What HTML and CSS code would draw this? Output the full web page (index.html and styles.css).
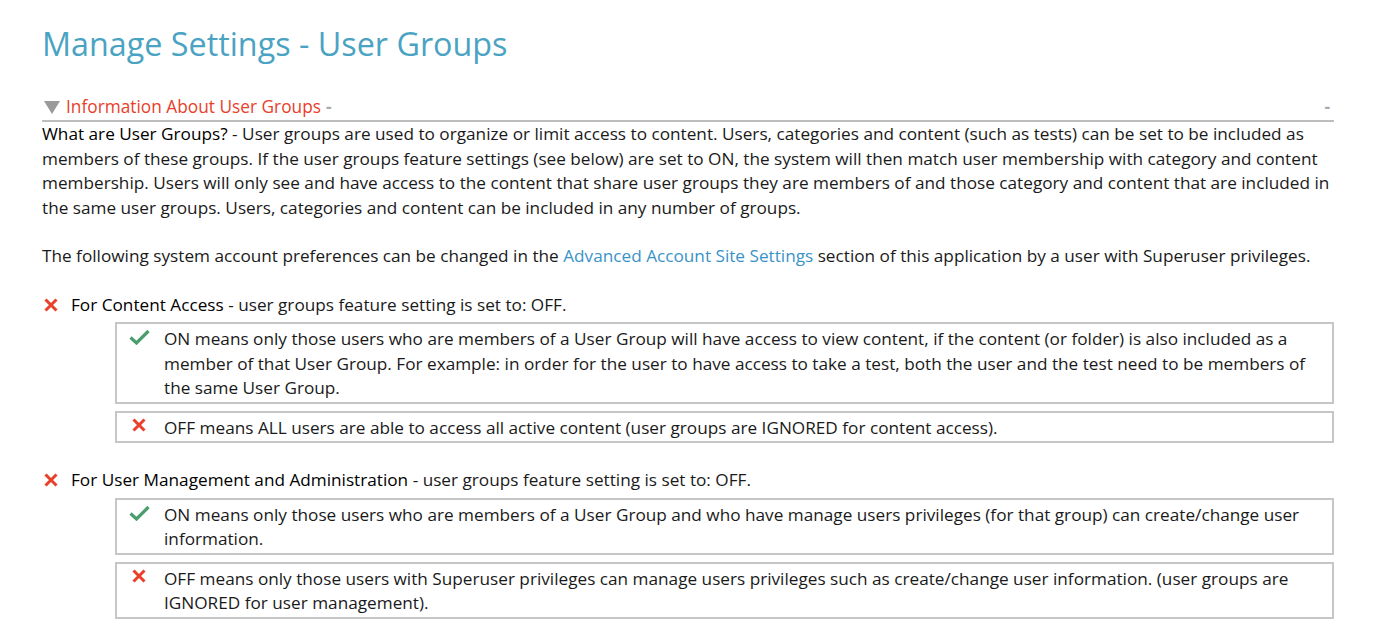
FILE: index.html
```html
<!DOCTYPE html>
<html lang="en">
<head>
  <meta charset="UTF-8" />
  <title>Manage Settings - User Groups</title>
  <link rel="stylesheet" href="styles.css">
</head>
<body>
  <h1 class="page-title">Manage Settings - User Groups</h1>

  <div class="section-head">
    <span class="arrow"></span>
    <span class="section-title">Information About User Groups</span>
    <span class="dash">-</span>
    <span class="dash right">-</span>
  </div>

  <div class="section-body">
    <p><span class="dark">What are User Groups?</span> - User groups are used to organize or limit access to content. Users, categories and content (such as tests) can be set to be included as members of these groups. If the user groups feature settings (see below) are set to ON, the system will then match user membership with category and content membership. Users will only see and have access to the content that share user groups they are members of and those category and content that are included in the same user groups. Users, categories and content can be included in any number of groups.</p>

    <p>The following system account preferences can be changed in the <a href="#">Advanced Account Site Settings</a> section of this application by a user with Superuser privileges.</p>

    <div class="setting">
      <div class="setting-line">
        <svg class="icon" viewBox="0 0 16 16"><path d="M2.5 2.5 L13.5 13.5 M13.5 2.5 L2.5 13.5" stroke="#e8402a" stroke-width="3" /></svg>
        <span><span class="dark">For Content Access</span> - user groups feature setting is set to: OFF.</span>
      </div>
      <div class="option">
        <svg class="icon check" viewBox="0 0 22 16"><path d="M2 8.5 L8 14 L20 2" stroke="#4a9e6c" stroke-width="3.2" fill="none" /></svg>
        <span>ON means only those users who are members of a User Group will have access to view content, if the content (or folder) is also included as a member of that User Group. For example: in order for the user to have access to take a test, both the user and the test need to be members of the same User Group.</span>
      </div>
      <div class="option">
        <svg class="icon cross" viewBox="0 0 16 16"><path d="M2.5 2.5 L13.5 13.5 M13.5 2.5 L2.5 13.5" stroke="#e8402a" stroke-width="3" /></svg>
        <span>OFF means ALL users are able to access all active content (user groups are IGNORED for content access).</span>
      </div>
    </div>

    <div class="setting">
      <div class="setting-line">
        <svg class="icon" viewBox="0 0 16 16"><path d="M2.5 2.5 L13.5 13.5 M13.5 2.5 L2.5 13.5" stroke="#e8402a" stroke-width="3" /></svg>
        <span><span class="dark">For User Management and Administration</span> - user groups feature setting is set to: OFF.</span>
      </div>
      <div class="option">
        <svg class="icon check" viewBox="0 0 22 16"><path d="M2 8.5 L8 14 L20 2" stroke="#4a9e6c" stroke-width="3.2" fill="none" /></svg>
        <span>ON means only those users who are members of a User Group and who have manage users privileges (for that group) can create/change user information.</span>
      </div>
      <div class="option">
        <svg class="icon cross" viewBox="0 0 16 16"><path d="M2.5 2.5 L13.5 13.5 M13.5 2.5 L2.5 13.5" stroke="#e8402a" stroke-width="3" /></svg>
        <span>OFF means only those users with Superuser privileges can manage users privileges such as create/change user information. (user groups are IGNORED for user management).</span>
      </div>
    </div>
  </div>
</body>
</html>
```

FILE: styles.css
```css
body {
  margin: 0;
  padding: 0 42px;
  font-family: "Open Sans", sans-serif;
  font-size: 17.2px;
  line-height: 24.5px;
  color: #1a1a1a;
  background: #fff;
}

.page-title {
  margin: 0;
  padding-top: 21px;
  font-size: 32.3px;
  font-weight: normal;
  line-height: 44px;
  color: #4aa3c2;
}

.section-head {
  display: flex;
  align-items: center;
  margin-top: 29px;
  height: 26px;
  border-bottom: 2px solid #bdbdbd;
}

.arrow {
  width: 0;
  height: 0;
  margin: 0 6px 0 2px;
  border-left: 8px solid transparent;
  border-right: 8px solid transparent;
  border-top: 13px solid #9a9a9a;
}

.section-title {
  font-size: 17.3px;
  color: #e8402a;
}

.dash {
  margin-left: 5px;
  color: #aaa;
  font-weight: bold;
}

.dash.right {
  margin-left: auto;
  margin-right: 4px;
}

.section-body p {
  margin: 0 0 24px 0;
}

.dark {
  color: #000;
}

a {
  color: #3a93c8;
  text-decoration: none;
}

.setting {
  margin-bottom: 25px;
}

.setting-line {
  display: flex;
  align-items: center;
  gap: 12px;
  padding-left: 1px;
  margin-bottom: 5px;
}

.setting-line .icon {
  width: 16px;
  height: 16px;
  flex-shrink: 0;
}

.option {
  display: flex;
  align-items: flex-start;
  margin: 0 0 7px 73px;
  padding: 3px 20px 1px 11px;
  border: 2px solid #c6c6c6;
}

.option .icon {
  flex-shrink: 0;
}

.option .check {
  width: 23px;
  height: 16px;
  margin: 2px 13px 0 0;
}

.option .cross {
  width: 16px;
  height: 16px;
  margin: 1px 17px 0 3px;
}
```
